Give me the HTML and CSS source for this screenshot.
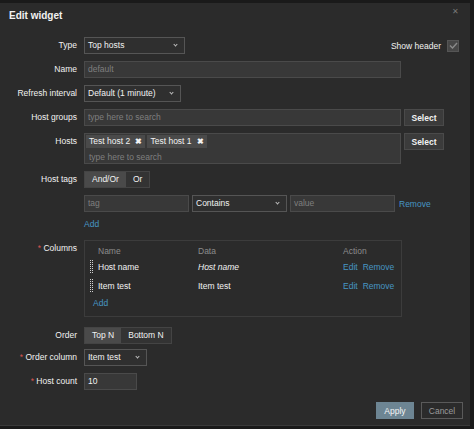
FILE: index.html
```html
<!DOCTYPE html>
<html lang="en">
<head>
    <meta charset="UTF-8">
    <title>Edit widget</title>
    <link rel="stylesheet" href="styles.css">
</head>
<body>
    <div class="dialog">
        <div class="dialog-header">
            <h2>Edit widget</h2>
            <span class="close">&#10005;</span>
        </div>

        <div class="form">
            <label class="lbl">Type</label>
            <div class="field row">
                <div class="select w-type">Top hosts <span class="chev"></span></div>
                <div class="spacer"></div>
                <span class="show-header">Show header</span>
                <span class="checkbox"><svg width="9" height="7" viewBox="0 0 9 7"><path d="M1 3.5 L3.5 6 L8 1" fill="none" stroke="#8a8a8a" stroke-width="1.4"/></svg></span>
            </div>

            <label class="lbl">Name</label>
            <div class="field"><div class="input w-wide placeholder">default</div></div>

            <label class="lbl">Refresh interval</label>
            <div class="field"><div class="select w-refresh">Default (1 minute) <span class="chev"></span></div></div>

            <label class="lbl">Host groups</label>
            <div class="field row">
                <div class="input w-wide placeholder">type here to search</div>
                <button class="btn">Select</button>
            </div>

            <label class="lbl">Hosts</label>
            <div class="field row top">
                <div class="multi w-wide">
                    <div class="chips">
                        <span class="chip">Test host 2 <b>&#10006;</b></span>
                        <span class="chip">Test host 1 <b>&#10006;</b></span>
                    </div>
                    <div class="placeholder search">type here to search</div>
                </div>
                <button class="btn">Select</button>
            </div>

            <label class="lbl">Host tags</label>
            <div class="field">
                <div class="segmented">
                    <span class="seg active">And/Or</span>
                    <span class="seg">Or</span>
                </div>
            </div>

            <span class="lbl"></span>
            <div class="field row">
                <div class="input w-tag placeholder">tag</div>
                <div class="select w-op">Contains <span class="chev"></span></div>
                <div class="input w-tag placeholder">value</div>
                <a class="link remove">Remove</a>
            </div>

            <span class="lbl"></span>
            <div class="field add-row"><a class="link">Add</a></div>

            <label class="lbl columns-lbl"><span class="req">*</span> Columns</label>
            <div class="field columns-field">
                <div class="columns">
                    <div class="col-row head">
                        <span class="c-handle"></span>
                        <span class="c-name">Name</span>
                        <span class="c-data">Data</span>
                        <span class="c-action">Action</span>
                    </div>
                    <div class="col-row">
                        <span class="c-handle">
                            <svg class="grip" width="4" height="13" viewBox="0 0 4 13">
                                <path d="M0 0h1v1H0zM2 0h1v1H2zM0 2h1v1H0zM2 2h1v1H2zM0 4h1v1H0zM2 4h1v1H2zM0 6h1v1H0zM2 6h1v1H2zM0 8h1v1H0zM2 8h1v1H2zM0 10h1v1H0zM2 10h1v1H2zM0 12h1v1H0zM2 12h1v1H2z" fill="#d0d0d0"/>
                            </svg>
                        </span>
                        <span class="c-name">Host name</span>
                        <span class="c-data"><em>Host name</em></span>
                        <span class="c-action"><a class="link">Edit</a><a class="link">Remove</a></span>
                    </div>
                    <div class="col-row">
                        <span class="c-handle">
                            <svg class="grip" width="4" height="13" viewBox="0 0 4 13">
                                <path d="M0 0h1v1H0zM2 0h1v1H2zM0 2h1v1H0zM2 2h1v1H2zM0 4h1v1H0zM2 4h1v1H2zM0 6h1v1H0zM2 6h1v1H2zM0 8h1v1H0zM2 8h1v1H2zM0 10h1v1H0zM2 10h1v1H2zM0 12h1v1H0zM2 12h1v1H2z" fill="#d0d0d0"/>
                            </svg>
                        </span>
                        <span class="c-name">Item test</span>
                        <span class="c-data">Item test</span>
                        <span class="c-action"><a class="link">Edit</a><a class="link">Remove</a></span>
                    </div>
                    <div class="col-add"><a class="link">Add</a></div>
                </div>
            </div>

            <label class="lbl order-lbl">Order</label>
            <div class="field order-field">
                <div class="segmented">
                    <span class="seg active">Top N</span>
                    <span class="seg">Bottom N</span>
                </div>
            </div>

            <label class="lbl"><span class="req">*</span> Order column</label>
            <div class="field"><div class="select w-ordercol">Item test <span class="chev"></span></div></div>

            <label class="lbl"><span class="req">*</span> Host count</label>
            <div class="field"><div class="input w-count">10</div></div>
        </div>

        <div class="dialog-footer">
            <button class="btn-apply">Apply</button>
            <button class="btn-cancel">Cancel</button>
        </div>
    </div>
</body>
</html>
```

FILE: styles.css
```css
* { margin: 0; padding: 0; box-sizing: border-box; }

body {
    font-family: "Liberation Sans", Arial, sans-serif;
    font-size: 8.5px;
    color: #f2f2f2;
    background: #1a1a1a;
    width: 474px;
    height: 429px;
    overflow: hidden;
}

.dialog {
    margin: 3px 4px 0 0;
    height: 423px;
    background: #2b2b2b;
    display: flex;
    flex-direction: column;
    border-bottom: 1px solid #3a3a3a;
}

.dialog-header {
    display: flex;
    justify-content: space-between;
    padding: 3px 11px 0 9px;
    height: 34px;
}

.dialog-header h2 {
    font-size: 10px;
    font-weight: bold;
    margin-top: 4px;
}

.close {
    color: #777;
    font-size: 8px;
    margin-top: 1px;
}

.form {
    display: grid;
    grid-template-columns: 77px 1fr;
    column-gap: 7px;
    row-gap: 7px;
    padding-right: 11px;
}

.lbl {
    text-align: right;
    line-height: 17px;
    white-space: nowrap;
}

.req { color: #d9534f; }

.field { min-height: 17px; }

.add-row { min-height: 12px; line-height: 12px; margin-top: -1px; }

.row {
    display: flex;
    align-items: center;
    gap: 3px;
}

.row.top { align-items: flex-start; }

.spacer { flex: 1; }

.input, .select, .multi {
    height: 17px;
    line-height: 15px;
    padding: 0 3px;
    background: #383838;
    border: 1px solid #4a4a4a;
    color: #f2f2f2;
    white-space: nowrap;
}

.select {
    background: #2f2f2f;
    border-color: #555;
    position: relative;
}

.chev {
    position: absolute;
    right: 7px;
    top: 5px;
    width: 3px;
    height: 3px;
    border-right: 1px solid #bdbdbd;
    border-bottom: 1px solid #bdbdbd;
    transform: rotate(45deg);
}

.placeholder { color: #7f7f7f; }

.w-type { width: 101px; }
.w-wide { width: 317px; }
.w-refresh { width: 97px; }
.w-tag { width: 105px; }
.w-op { width: 95px; }
.w-ordercol { width: 63px; }
.w-count { width: 53px; }

.show-header { margin-right: 3px; }

.checkbox {
    width: 12px;
    height: 12px;
    background: #474747;
    border: 1px solid #555;
    display: flex;
    align-items: center;
    justify-content: center;
}

.btn {
    height: 17px;
    width: 40px;
    font-family: inherit;
    font-size: 8.5px;
    font-weight: bold;
    color: #f2f2f2;
    background: #3b3b3b;
    border: 1px solid #4a4a4a;
}

.multi {
    height: 31px;
    padding: 1px 1px;
}

.chips { display: flex; gap: 2px; }

.chip {
    background: #4a4a4a;
    line-height: 13px;
    padding: 0 3px;
}

.chip b { font-size: 8px; margin-left: 3px; }

.search { padding: 3px 3px 0; line-height: 12px; }

.segmented {
    display: inline-flex;
    border: 1px solid #444;
    height: 17px;
}

.seg {
    line-height: 15px;
    padding: 0 7px;
    background: #333;
}

.seg.active { background: #4a4a4a; }

.link {
    color: #4796c4;
    cursor: pointer;
}

.remove { margin-left: 1px; }

.columns-lbl, .columns-field { margin-top: 3px; }

.columns {
    width: 318px;
    height: 77px;
    border: 1px solid #3c3c3c;
    padding: 3px 0 0 4px;
}

.col-row {
    display: flex;
    align-items: center;
    height: 19px;
    white-space: nowrap;
}

.col-row.head { height: 13px; color: #8c8c8c; }

.c-handle { width: 9px; display: flex; }
.c-name { width: 100px; }
.c-data { width: 145px; }
.c-action { flex: 1; display: flex; gap: 5px; }

.grip { margin-left: 1px; }

.col-add { padding: 3px 0 0 4px; }

.order-lbl, .order-field { margin-top: 3px; margin-bottom: -2px; }

.dialog-footer {
    margin-top: auto;
    display: flex;
    justify-content: flex-end;
    gap: 7px;
    padding: 0 7px 6px 0;
}

.btn-apply, .btn-cancel {
    height: 17px;
    font-family: inherit;
    font-size: 8.5px;
}

.btn-apply {
    width: 38px;
    background: #6d8593;
    color: #f5f5f5;
    border: 1px solid #6d8593;
}

.btn-cancel {
    width: 42px;
    background: transparent;
    color: #9a9a9a;
    border: 1px solid #5a5a5a;
}
```
